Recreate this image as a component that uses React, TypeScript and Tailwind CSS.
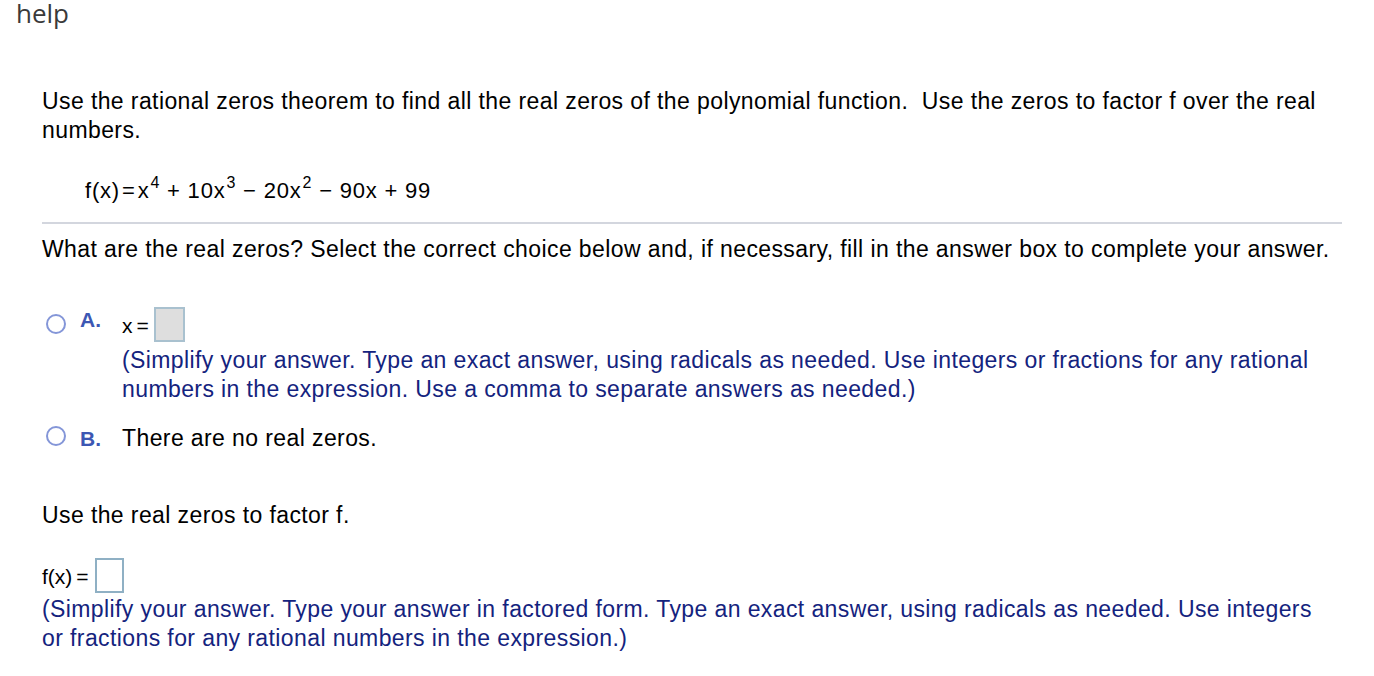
import React from "react";

const Radio = () => (
  <span className="inline-block w-[20px] h-[20px] rounded-full border-2 border-[#8496d8] bg-white shrink-0" />
);

const Sup = ({ children }: { children: React.ReactNode }) => (
  <span className="text-[16px] relative top-[-10px] ml-[1px]">{children}</span>
);

export default function App() {
  return (
    <div className="w-[1374px] h-[676px] bg-white overflow-hidden relative" style={{ fontFamily: '"Liberation Sans", Arial, sans-serif' }}>
      <div className="pl-[16px] text-[26px] leading-[26px] text-[#3a3a3a]" style={{ fontFamily: '"Open Sans", Lato, sans-serif' }}>help</div>
      <div className="pl-[42px] pr-[20px] pt-[61px] text-[23px] tracking-[0.4px] text-black">
        <p className="leading-[29px] w-[1290px]">
          Use the rational zeros theorem to find all the real zeros of the polynomial function.&nbsp; Use the zeros to factor f over the real numbers.
        </p>
        <div className="pl-[43px] mt-[33px] text-[22px] leading-[26px] tracking-[0.8px] whitespace-nowrap">
          f(x)<span className="mx-[2px]">=</span>x<Sup>4</Sup> + 10x<Sup>3</Sup> − 20x<Sup>2</Sup> − 90x + 99
        </div>
        <div className="mt-[16px] h-[2px] w-[1300px] bg-[#d3d6de]" />
        <p className="mt-[11px] leading-[29px] whitespace-nowrap">
          What are the real zeros? Select the correct choice below and, if necessary, fill in the answer box to complete your answer.
        </p>
        <div className="mt-[43px] flex items-start">
          <div className="pl-[4px] pt-[2px]"><Radio /></div>
          <span className="ml-[14px] mt-[1px] font-bold text-[21px] tracking-[0px] text-[#3c57b3] leading-[24px]">A.</span>
          <div className="ml-[21px]">
            <div className="flex items-start h-[36px]">
              <span className="text-[21px] tracking-[0px] leading-[24px] mt-[7px]">x<span className="ml-[4px]">=</span></span>
              <span className="ml-[5px] inline-block w-[31px] h-[35px] bg-[#dedede] border-2 border-[#a9c1cf]" />
            </div>
            <p className="text-[#14237e] leading-[29px] mt-[3px] w-[1210px]">
              (Simplify your answer. Type an exact answer, using radicals as needed. Use integers or fractions for any rational numbers in the expression. Use a comma to separate answers as needed.)
            </p>
          </div>
        </div>
        <div className="mt-[17px] flex items-center">
          <div className="pl-[4px]"><Radio /></div>
          <span className="ml-[14px] font-bold text-[21px] tracking-[0px] text-[#3c57b3] leading-[29px]">B.</span>
          <span className="ml-[21px] leading-[29px]">There are no real zeros.</span>
        </div>
        <p className="mt-[45px] leading-[29px]">Use the real zeros to factor f.</p>
        <div className="mt-[28px] flex items-center h-[35px]">
          <span className="text-[21px] tracking-[0px] mt-[4px]">f(x)<span className="ml-[4px]">=</span></span>
          <span className="ml-[6px] inline-block w-[29px] h-[35px] bg-white border-2 border-[#8fb0c4]" />
        </div>
        <p className="text-[#14237e] leading-[29px] mt-[2px] w-[1285px]">
          (Simplify your answer. Type your answer in factored form. Type an exact answer, using radicals as needed. Use integers or fractions for any rational numbers in the expression.)
        </p>
      </div>
    </div>
  );
}
